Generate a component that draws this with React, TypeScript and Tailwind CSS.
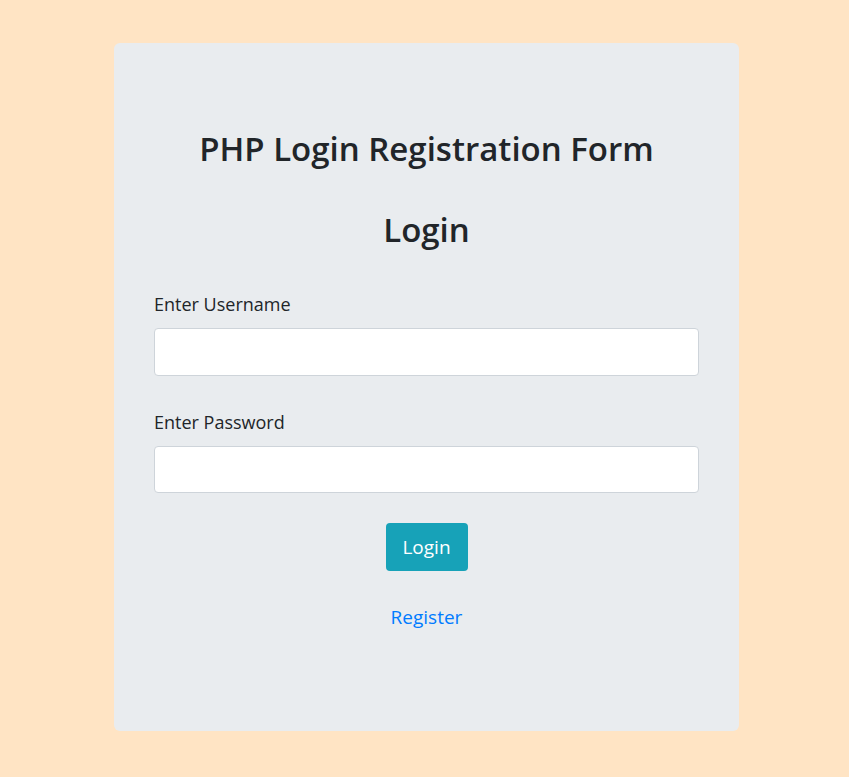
export default function App() {
  return (
    <div
      className="min-h-screen bg-[#ffe4c4] pt-[43px] text-[#212529]"
      style={{ fontFamily: '"Open Sans", "Noto Sans", sans-serif' }}
    >
      <div className="ml-[114px] flex h-[688px] w-[625px] flex-col rounded-md bg-[#e9ecef] px-10 pt-[85px]">
        <h2 className="text-center text-[33px] leading-[41px] font-semibold">PHP Login Registration Form</h2>
        <h2 className="mt-10 text-center text-[33px] leading-[41px] font-semibold">Login</h2>

        <form className="mt-[41px] flex flex-col">
          <label className="text-[18px] leading-[27px]">Enter Username</label>
          <input
            type="text"
            className="mt-[10px] h-[48px] w-full rounded border border-[#ced4da] bg-white px-4 text-[18px] outline-none"
          />

          <label className="mt-[33px] text-[18px] leading-[27px]">Enter Password</label>
          <input
            type="password"
            className="mt-[10px] h-[47px] w-full rounded border border-[#ced4da] bg-white px-4 text-[18px] outline-none"
          />

          <div className="mt-[30px] flex justify-center">
            <button
              type="button"
              className="h-[48px] w-[82px] rounded bg-[#17a2b8] text-[19px] text-white"
            >
              Login
            </button>
          </div>

          <div className="mt-[33px] text-center text-[19px] leading-[27px]">
            <a href="#" className="text-[#007bff]">Register</a>
          </div>
        </form>
      </div>
    </div>
  );
}
